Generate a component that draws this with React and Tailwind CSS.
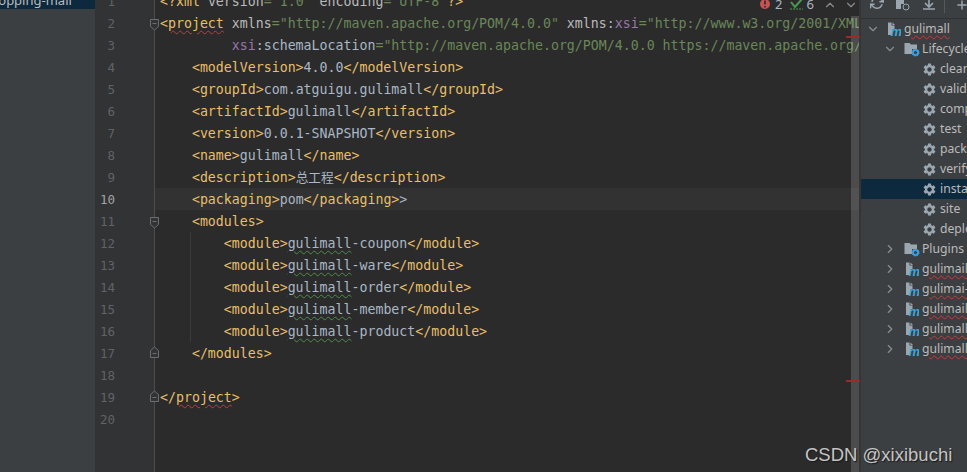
import { MdSettings } from "react-icons/md";
import { FiChevronDown, FiChevronRight, FiChevronUp, FiPlus, FiRefreshCw } from "react-icons/fi";

const tag = "text-[#e8bf6a]";
const txt = "text-[#a9b7c6]";
const str = "text-[#6a8759]";
const attr = "text-[#bababa]";
const ns = "text-[#9876aa]";
const redWave = "underline decoration-wavy decoration-[#bc3f3c] decoration-1 underline-offset-2";
const greenWave = "underline decoration-wavy decoration-[#4f8a4f] decoration-1 underline-offset-2";

const moduleLine = (name) => [
  [tag, "        <module>"],
  [`${txt} ${greenWave}`, "gulimall"],
  [txt, `-${name}`],
  [tag, "</module>"],
];

const lines = [
  [[tag, "<?xml "], [attr, "version"], [str, '="1.0" '], [attr, "encoding"], [str, '="UTF-8"'], [tag, "?>"]],
  [
    [tag, "<"],
    [`${tag} ${redWave}`, "project"],
    [attr, " xmlns"],
    [str, '="http://maven.apache.org/POM/4.0.0"'],
    [attr, " xmlns"],
    [txt, ":"],
    [ns, "xsi"],
    [str, '="http://www.w3.org/2001/XMLSchema-instance"'],
  ],
  [
    [attr, "         "],
    [ns, "xsi"],
    [txt, ":schemaLocation"],
    [str, '="http://maven.apache.org/POM/4.0.0 https://maven.apache.org/xsd/maven-4.0.0.xsd">'],
  ],
  [[tag, "    <modelVersion>"], [txt, "4.0.0"], [tag, "</modelVersion>"]],
  [[tag, "    <groupId>"], [txt, "com.atguigu.gulimall"], [tag, "</groupId>"]],
  [[tag, "    <artifactId>"], [txt, "gulimall"], [tag, "</artifactId>"]],
  [[tag, "    <version>"], [txt, "0.0.1-SNAPSHOT"], [tag, "</version>"]],
  [[tag, "    <name>"], [txt, "gulimall"], [tag, "</name>"]],
  [[tag, "    <description>"], [`${txt} text-[12.7px]`, "总工程"], [tag, "</description>"]],
  [[tag, "    <packaging>"], [txt, "pom"], [tag, "</packaging>"], [txt, ">"]],
  [[tag, "    <modules>"]],
  moduleLine("coupon"),
  moduleLine("ware"),
  moduleLine("order"),
  moduleLine("member"),
  moduleLine("product"),
  [[tag, "    </modules>"]],
  [],
  [[tag, "</"], [`${tag} ${redWave}`, "project"], [tag, ">"]],
  [],
];

const foldRows = { 2: "open", 11: "open", 17: "close", 19: "close" };

const FoldMark = ({ type }) =>
  type === "open" ? (
    <svg width="9" height="12" viewBox="0 0 9 12" className="absolute top-[7px] left-[55px]">
      <path d="M0.5 0.5H8.5V7.5L4.5 11L0.5 7.5Z M2.5 4.5H6.5" fill="#313335" stroke="#6b6f72" />
    </svg>
  ) : (
    <svg width="9" height="12" viewBox="0 0 9 12" className="absolute top-[4px] left-[55px]">
      <path d="M0.5 11.5H8.5V4.5L4.5 1L0.5 4.5Z M2.5 7.5H6.5" fill="#313335" stroke="#6b6f72" />
    </svg>
  );

const MavenIcon = () => (
  <svg width="16" height="16" viewBox="0 0 16 16" className="shrink-0">
    <path d="M3 1.5H6.5V4.5H9.5V8H7V14H3Z" fill="#9aa7b0" />
    <path d="M7.5 1.5L10 4H7.5Z" fill="#9aa7b0" />
    <text x="5.5" y="14.5" fontSize="13" fontWeight="700" fontStyle="italic" fontFamily="Liberation Sans" fill="#3ea6d8">
      m
    </text>
  </svg>
);

const FolderGear = () => (
  <svg width="16" height="16" viewBox="0 0 16 16" className="shrink-0">
    <path d="M0.5 2H5.5L7 3.5H13V8H8V13H0.5Z" fill="#9aa7b0" />
    <circle cx="11.5" cy="11.5" r="2.6" fill="none" stroke="#3a9fe0" strokeWidth="2" />
    <circle cx="11.5" cy="11.5" r="3.6" fill="none" stroke="#3a9fe0" strokeWidth="1" strokeDasharray="1.4 1.4" />
  </svg>
);

const phases = ["clean", "validate", "compile", "test", "package", "verify", "install", "site", "deploy"];
const modules = ["gulimail-coupon", "gulimai-ware", "gulimail-order", "gulimall-member", "gulimall-product"];

const TreeRow = ({ selected, children }) => (
  <div className={`flex h-5 items-center whitespace-nowrap ${selected ? "bg-[#0d293e]" : ""}`}>{children}</div>
);

export default function App() {
  return (
    <div className="relative flex h-[472px] w-[967px] overflow-hidden bg-[#2b2b2b] font-['Noto_Sans',sans-serif] text-[12.2px] text-[#bbbbbb]">
      {/* project tree stub */}
      <aside className="w-[95px] shrink-0 overflow-hidden bg-[#3c3f41]">
        <div className="h-[9px] overflow-hidden bg-[#0d293e]">
          <div className="-mt-[9px] -ml-[16px] whitespace-nowrap text-[13px] leading-[18px]">shopping-mall</div>
        </div>
      </aside>

      {/* editor */}
      <main className="relative min-w-0 flex-1 overflow-hidden bg-[#2b2b2b] font-['DejaVu_Sans_Mono','Noto_Sans_CJK_SC',monospace] text-[13.25px]">
        <div className="-mt-[10px]">
          {lines.map((tokens, i) => {
            const n = i + 1;
            return (
              <div key={n} className={`flex h-[22px] ${n === 10 ? "bg-[#323232]" : ""}`}>
                <div className="relative flex h-full w-[60px] shrink-0 border-r border-[#4a4c4e] bg-[#313335]">
                  <span className={`w-[20px] text-right text-[12.5px] leading-[24px] ${n === 10 ? "text-[#a4a3a3]" : "text-[#606366]"}`}>
                    {n}
                  </span>
                  {foldRows[n] && <FoldMark type={foldRows[n]} />}
                </div>
                <pre className="pl-[5px] font-['DejaVu_Sans_Mono','Noto_Sans_CJK_SC',monospace] leading-[24px] whitespace-pre">
                  {tokens.map(([cls, text], j) => (
                    <span key={j} className={cls}>
                      {text}
                    </span>
                  ))}
                </pre>
              </div>
            );
          })}
          <div className="h-[60px] w-[60px] border-r border-[#4a4c4e] bg-[#313335]" />
        </div>

        {/* indent guide for the modules block */}
        <div className="absolute top-[232px] left-[95px] h-[110px] w-px bg-[#3b3b3b]" />

        {/* inspection widget */}
        <div className="absolute top-0 right-0 flex h-[9px] w-[111px] items-center overflow-visible bg-[#2b2b2b] pl-[10px] font-['Noto_Sans',sans-serif] text-[13px] text-[#a9b7c6]">
          <svg width="10" height="10" viewBox="0 0 10 10" className="-mt-[2px] shrink-0">
            <circle cx="5" cy="5" r="5" fill="#c75450" />
            <path d="M5 1.5V5.5M5 7V8.5" stroke="#2b2b2b" strokeWidth="1.6" />
          </svg>
          <span className="ml-[5px]">2</span>
          <svg width="13" height="12" viewBox="0 0 13 12" className="ml-[8px] shrink-0">
            <path d="M1 3L5 8L12 0" fill="none" stroke="#499c54" strokeWidth="2" />
            <path d="M0 10H13" stroke="#499c54" strokeDasharray="2 1" />
          </svg>
          <span className="ml-[3px]">6</span>
          <FiChevronUp className="ml-[9px] shrink-0 text-[#8a8d8f]" size={14} />
          <FiChevronDown className="ml-[7px] shrink-0 text-[#8a8d8f]" size={14} />
        </div>

        {/* scrollbar and error stripes */}
        <div className="absolute top-[16px] right-[2px] bottom-0 w-2 bg-[#ffffff28]" />
        <div className="absolute top-0 right-0 bottom-0 w-[2px] bg-[#353535]" />
        <div className="absolute top-[36px] right-[1px] h-[2px] w-[14px] bg-[#9e2927]" />
        <div className="absolute top-[380px] right-[1px] h-[2px] w-[14px] bg-[#9e2927]" />
      </main>

      {/* maven panel */}
      <aside className="w-[106px] shrink-0 overflow-hidden bg-[#3c3f41]">
        <div className="flex h-[19px] items-start border-b border-[#323232] text-[#9aa7b0]">
          <FiRefreshCw size={14} strokeWidth={2.5} className="-mt-[4px] ml-[9px] shrink-0" />
          <svg width="16" height="14" viewBox="0 0 16 14" className="-mt-[2px] ml-[11px] shrink-0">
            <path d="M1 0H9V6H6V11H1Z" fill="#9aa7b0" />
            <circle cx="11" cy="9" r="3" fill="none" stroke="#9aa7b0" />
          </svg>
          <svg width="14" height="14" viewBox="0 0 14 14" className="-mt-[1px] ml-[11px] shrink-0">
            <path d="M7 0V7M3 4L7 8L11 4M1 10H13" fill="none" stroke="#9aa7b0" strokeWidth="1.6" />
          </svg>
          <span className="ml-[8px] h-[13px] w-px shrink-0 bg-[#55585a]" />
          <FiPlus size={14} strokeWidth={2.5} className="-mt-[2px] ml-[10px] shrink-0" />
        </div>
        <div>
          <TreeRow>
            <FiChevronDown size={14} className="ml-[5px] shrink-0 text-[#8a8d8f]" />
            <span className="ml-[5px] shrink-0"><MavenIcon /></span>
            <span className={`ml-[3px] shrink-0 ${redWave}`}>gulimall</span>
          </TreeRow>
          <TreeRow>
            <FiChevronDown size={14} className="ml-[22px] shrink-0 text-[#8a8d8f]" />
            <span className="ml-[7px] shrink-0"><FolderGear /></span>
            <span className="ml-[2px] shrink-0">Lifecycle</span>
          </TreeRow>
          {phases.map((p) => (
            <TreeRow key={p} selected={p === "install"}>
              <MdSettings size={15} className="ml-[61px] shrink-0 text-[#9aa7b0]" />
              <span className="ml-[3px] shrink-0">{p}</span>
            </TreeRow>
          ))}
          <TreeRow>
            <FiChevronRight size={14} className="ml-[22px] shrink-0 text-[#8a8d8f]" />
            <span className="ml-[7px] shrink-0"><FolderGear /></span>
            <span className="ml-[2px] shrink-0">Plugins</span>
          </TreeRow>
          {modules.map((m) => (
            <TreeRow key={m}>
              <FiChevronRight size={14} className="ml-[22px] shrink-0 text-[#8a8d8f]" />
              <span className="ml-[6px] shrink-0"><MavenIcon /></span>
              <span className={`ml-[3px] shrink-0 ${redWave}`}>{m}</span>
            </TreeRow>
          ))}
        </div>
      </aside>

      {/* watermark */}
      <div className="absolute top-[444px] left-[805px] font-['Liberation_Sans',sans-serif] text-[18.5px] leading-[22px] whitespace-nowrap text-[#c4c4c4] [text-shadow:1px_1px_1px_#1a1a1a]">
        CSDN @xixibuchi
      </div>
    </div>
  );
}
